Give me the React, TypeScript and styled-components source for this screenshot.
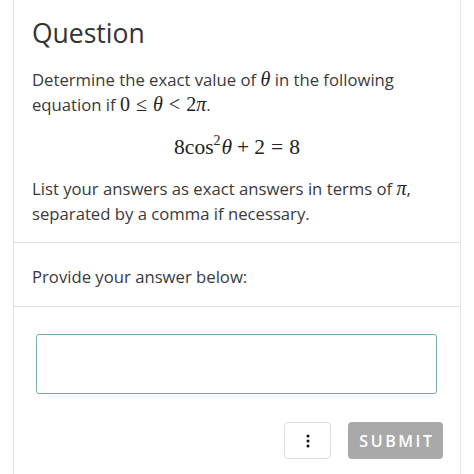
import styled, { createGlobalStyle } from "styled-components";

const GlobalStyle = createGlobalStyle`
  html, body {
    margin: 0;
    padding: 0;
    background: #ffffff;
  }
  body {
    font-family: "Open Sans", "Liberation Sans", sans-serif;
    color: #333333;
  }
`;

const Card = styled.div`
  margin-left: 13px;
  width: 446px;
  min-height: 100vh;
  border-left: 1px solid #e2e2e2;
  border-right: 1px solid #e2e2e2;
  background: #ffffff;
`;

const Section = styled.section<{ $top: number; $bottom: number; $divider?: boolean }>`
  padding: ${(p) => p.$top}px 18px ${(p) => p.$bottom}px;
  border-bottom: ${(p) => (p.$divider ? "1px solid #e2e2e2" : "none")};
`;

const Title = styled.h1`
  margin: 0 0 18px;
  font-size: 26.5px;
  line-height: 32px;
  font-weight: 400;
  color: #333333;
`;

const Text = styled.p<{ $gap?: number }>`
  margin: 0 0 ${(p) => p.$gap ?? 0}px;
  font-size: 16.7px;
  line-height: 25px;
  color: #3a3a3a;
`;

const M = styled.span`
  font-family: "Liberation Serif", "DejaVu Serif", serif;
  font-size: 20px;
  color: #222;
`;

const I = styled.i`
  font-family: "Liberation Serif", "DejaVu Serif", serif;
  font-style: italic;
`;

const Op = styled.span<{ $space?: number }>`
  display: inline-block;
  margin: 0 ${(p) => p.$space ?? 6}px;
`;

const Equation = styled.div`
  margin: 0 0 16px;
  text-align: center;
  font-family: "Liberation Serif", "DejaVu Serif", serif;
  font-size: 21.5px;
  line-height: 25px;
  color: #222;
`;

const Sup = styled.sup`
  font-size: 14px;
  line-height: 0;
  vertical-align: 9px;
  margin-right: 1px;
`;

const AnswerArea = styled.div`
  padding: 27px 23px 0 22px;
`;

const Input = styled.input`
  display: block;
  box-sizing: border-box;
  width: 401px;
  height: 60px;
  border: 1.5px solid #76a6b9;
  border-radius: 3px;
  outline: none;
  background: #fff;
`;

const Actions = styled.div`
  display: flex;
  justify-content: flex-end;
  gap: 17px;
  margin-top: 28px;
  margin-right: -6px;
`;

const MoreButton = styled.button`
  box-sizing: border-box;
  width: 47px;
  height: 37px;
  border: 1px solid #dedede;
  border-radius: 4px;
  background: #fff;
  display: flex;
  align-items: center;
  justify-content: center;
  padding: 0;
`;

const SubmitButton = styled.button`
  box-sizing: border-box;
  width: 95px;
  height: 37px;
  border: none;
  border-radius: 4px;
  background: #a9a9a9;
  color: #ffffff;
  font-family: "Open Sans", "Liberation Sans", sans-serif;
  font-size: 16px;
  font-weight: 600;
  letter-spacing: 2.6px;
  padding: 0 0 0 3px;
`;

function DotsIcon() {
  return (
    <svg width="6" height="16" viewBox="0 0 6 16">
      <circle cx="3" cy="3" r="1.5" fill="#111" />
      <circle cx="3" cy="8" r="1.5" fill="#111" />
      <circle cx="3" cy="13" r="1.5" fill="#111" />
    </svg>
  );
}

export default function App() {
  return (
    <>
      <GlobalStyle />
      <Card>
        <Section $top={17} $bottom={16} $divider>
          <Title>Question</Title>
          <Text $gap={18}>
            Determine the exact value of <M><I>θ</I></M> in the following
            equation if{" "}
            <M>
              0<Op>≤</Op>
              <I>θ</I>
              <Op>&lt;</Op>2<I>π</I>
            </M>
            .
          </Text>
          <Equation>
            8cos<Sup>2</Sup>
            <I>θ</I>
            <Op $space={5}>+</Op>2<Op>=</Op>8
          </Equation>
          <Text>
            List your answers as exact answers in terms of <M><I>π</I></M>,
            separated by a comma if necessary.
          </Text>
        </Section>
        <Section $top={21} $bottom={17} $divider>
          <Text>Provide your answer below:</Text>
        </Section>
        <AnswerArea>
          <Input type="text" />
          <Actions>
            <MoreButton>
              <DotsIcon />
            </MoreButton>
            <SubmitButton>SUBMIT</SubmitButton>
          </Actions>
        </AnswerArea>
      </Card>
    </>
  );
}
